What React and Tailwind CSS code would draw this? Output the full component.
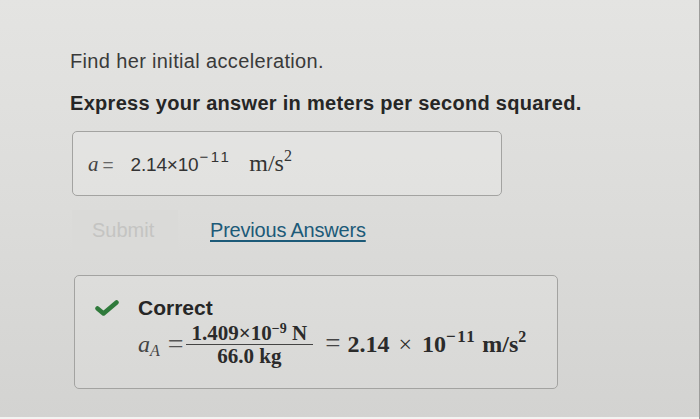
import React from "react";

const serif = { fontFamily: '"Liberation Serif", "Times New Roman", serif' };

function Check() {
  return (
    <svg width="24" height="16" viewBox="0 0 24 16" className="shrink-0">
      <path d="M2.5 8.5 L8.5 13.5 L21.5 2.5" fill="none" stroke="#2f7a3b" strokeWidth="4.5" strokeLinecap="round" strokeLinejoin="round" />
    </svg>
  );
}

export default function App() {
  return (
    <div
      className="w-[700px] h-[419px] overflow-hidden flex flex-col bg-gradient-to-b from-[#e4e4e2] via-[#dcdcda] to-[#d3d3d1] text-[#2b2b2b] border-r border-[#9c9c9a]"
      style={{ fontFamily: '"Liberation Sans", Arial, sans-serif' }}
    >
      <div className="flex-1 pl-[70px] pt-[48px]">
        <p className="text-[20px] leading-[26px] text-[#3a3a3a] tracking-[0.35px]">Find her initial acceleration.</p>
        <p className="mt-[16px] text-[20px] leading-[26px] font-bold text-[#262626] tracking-[0.3px]">
          Express your answer in meters per second squared.
        </p>

        <div className="mt-[15px] ml-[2px] w-[430px] h-[65px] rounded-[5px] border border-[#a3a3a1] bg-white/15 flex items-center pl-[15px] pb-[2px]">
          <span className="flex items-baseline text-[19px] text-[#333]">
            <span className="italic text-[21px] text-[#444]" style={serif}>a</span>
            <span className="ml-[4px] text-[#666]">=</span>
            <span className="ml-[17px] tracking-[-0.2px]">2.14×10</span>
            <span className="relative -top-[9px] ml-[1px] text-[15px] tracking-[2.5px]">−11</span>
            <span className="ml-[18px] text-[24px]" style={serif}>
              m/s<span className="relative -top-[10px] text-[16px]">2</span>
            </span>
          </span>
        </div>

        <div className="mt-[14px] ml-[2px] flex items-center">
          <div className="w-[106px] h-[40px] bg-[#dadad8] flex items-center pl-[20px] text-[20px] text-[#c4c4c2]">
            Submit
          </div>
          <a className="ml-[32px] text-[20px] text-[#1c5a78] underline underline-offset-[3px] tracking-[-0.2px]">
            Previous Answers
          </a>
        </div>

        <div className="mt-[25px] ml-[4px] w-[484px] h-[114px] rounded-[5px] border border-[#a3a3a1] bg-white/10 pt-[20px] pl-[20px]">
          <div className="flex items-center">
            <Check />
            <span className="ml-[19px] text-[21px] leading-[24px] font-bold text-[#262626]">Correct</span>
          </div>
          <div className="ml-[43px] flex items-center text-[#2b2b2b]" style={serif}>
            <span className="italic text-[24px] text-[#444]">
              a<sub className="text-[16px]">A</sub>
            </span>
            <span className="ml-[8px] text-[28px] leading-[28px] text-[#555]">=</span>
            <span className="ml-[2px] flex flex-col items-center leading-[22px] font-bold text-[21px]">
              <span className="px-[6px] border-b border-[#444] pt-[2px]">
                1.409×10<sup className="text-[14px]">−9</sup> N
              </span>
              <span>66.0 kg</span>
            </span>
            <span className="flex items-baseline font-bold text-[24px]">
              <span className="ml-[12px] font-normal text-[27px] text-[#444]">=</span>
              <span className="ml-[7px]">2.14</span>
              <span className="ml-[9px] font-normal">×</span>
              <span className="ml-[10px]">10</span>
              <span className="relative -top-[10px] text-[17px] tracking-[1.5px]">−11</span>
              <span className="ml-[6px]">m/s</span>
              <span className="relative -top-[10px] text-[16px]">2</span>
            </span>
          </div>
        </div>
      </div>
      <div className="h-[2px] bg-[#f4f4f2]" />
    </div>
  );
}
